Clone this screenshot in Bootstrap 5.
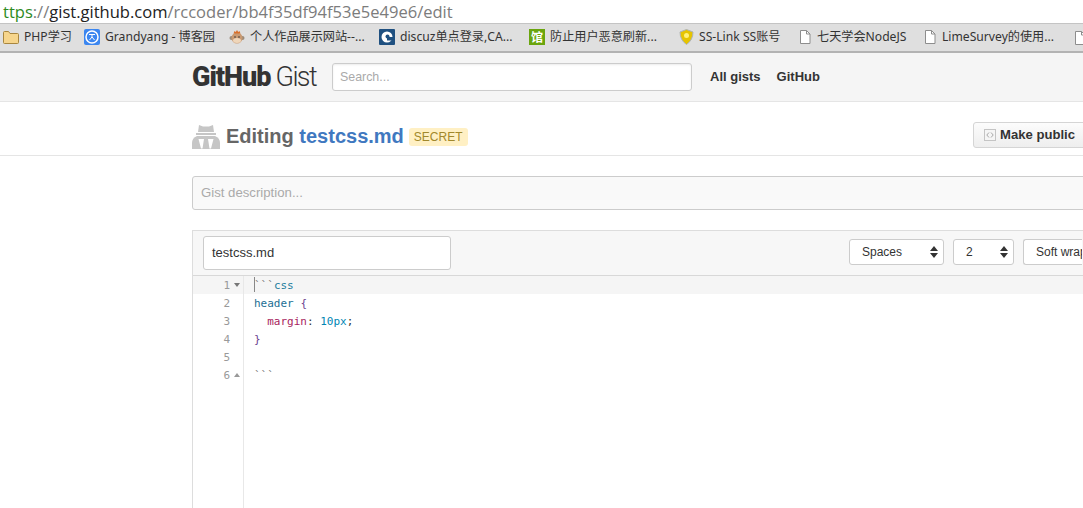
<!DOCTYPE html>
<html lang="zh">
<head>
<meta charset="utf-8">
<title>Editing testcss.md</title>
<link href="https://cdn.jsdelivr.net/npm/bootstrap@5.3.0/dist/css/bootstrap.min.css" rel="stylesheet">
<style>
html,body{height:100%;overflow:hidden;background:#fff}
body{font-family:"Liberation Sans",Arial,"Noto Sans CJK SC",sans-serif;color:#333;font-size:13px;width:1083px}
.url-bar{height:24px;border-bottom:1px solid #c4c4c4;padding-left:3px;font-family:"Open Sans","Noto Sans",sans-serif;font-size:16.55px;line-height:23px;color:#7c7c7c;white-space:nowrap;overflow:hidden}
.url-sec{color:#2e8b1e}
.url-host{color:#222}
.bm-bar{height:29px;background:#dfdfdf;border-bottom:2px solid #b3b3b3;padding-left:3px;font-family:"Noto Sans","Noto Sans CJK SC",sans-serif;font-size:12.15px;color:#333;white-space:nowrap;overflow:hidden}
.bm-link{flex:none;gap:5px}
.bm-link svg{flex:none}
.bm-w1{width:81px}.bm-w2{width:145px}.bm-w3{width:150px}.bm-w4{width:119px}.bm-w5{width:125px}
.gist-head{height:49px;background:#f5f5f5;border-bottom:1px solid #e5e5e5;padding-left:192px}
.gist-logo{width:140px;font-family:"Roboto","Liberation Sans",sans-serif;font-size:27px;line-height:1;color:#333;letter-spacing:-1px}
.gist-logo b{font-weight:900}
.gist-logo span{font-weight:300;margin-left:5px;letter-spacing:-1.6px}
.search-box{width:360px;height:28px;background:#fff;border:1px solid #ccc;border-radius:3px;padding:0 7px;font-size:12.4px;line-height:26px;color:#aaa;box-shadow:inset 0 1px 2px rgba(0,0,0,.075)}
.head-link{font-size:13px;font-weight:700;color:#333;text-decoration:none;margin-left:18px}
.head-link+.head-link{margin-left:16px}
.title-row{height:54px;border-bottom:1px solid #e5e5e5}
.page-col{margin-left:192px;width:980px}
.title-row .page-col{height:53px;padding-top:14px}
.agent{margin-right:6px;margin-top:4px}
.title-txt{font-size:20px;font-weight:700;color:#666;line-height:1}
.title-txt a{color:#4078c0;text-decoration:none}
.secret-tag{background:#fff0c4;color:#a1882b;font-size:12px;line-height:18px;height:18px;padding:0 5px;border-radius:3px;margin-left:5px;margin-top:2px}
.public-btn{margin-left:auto;width:199px;height:26px;border:1px solid #d5d5d5;border-radius:3px;background:linear-gradient(#fcfcfc,#eee);font-size:13.1px;font-weight:700;color:#333;padding-left:10px;margin-top:-1px;gap:4px}
.desc-box{height:34px;margin-top:20px;border:1px solid #ccc;border-radius:3px;background:#f9f9f9;padding:0 8px;line-height:31px;font-size:13.2px;color:#aaa}
.file-box{margin-top:20px;border:1px solid #ddd;border-bottom:0;height:300px}
.file-head{height:45px;background:#f7f7f7;border-bottom:1px solid #d8d8d8;padding:5px 10px}
.name-box{width:248px;height:34px;background:#fff;border:1px solid #ccc;border-radius:3px;padding:0 8px;font-size:13px;line-height:32px;color:#333}
.sel-box{height:26px;border:1px solid #ccc;border-radius:3px;background:#fff;font-size:12px;line-height:24px;padding-left:12px;color:#333;margin-top:3px;margin-right:9px}
.sel-spaces{width:95px;margin-left:398px}
.sel-size{width:61px}
.sel-wrap{width:59px;margin-right:0;overflow:hidden;white-space:nowrap;border-right:0;border-radius:3px 0 0 3px}
.updown{margin-right:5px}
.code-area{font-family:"DejaVu Sans Mono","Liberation Mono",monospace;font-size:11px;line-height:18px;height:260px;color:#333}
.gut{width:51px;border-right:1px solid #e8e8e8;height:100%;color:#999;flex:none}
.gut-row{height:18px;padding-right:13px;text-align:right;position:relative;line-height:19px}
.gut-row.on,.code-row.on{background:#f5f5f5}
.fold{position:absolute;right:3px;top:7px;display:block}
.code-lines{flex:1}
.code-row{height:18px;padding-left:10px;white-space:pre;position:relative;line-height:19px}
.caret-bar{position:absolute;left:10px;top:1px;width:1px;height:15px;background:#888}
.c-tick{color:#777}.c-css{color:#1d7e9e}.c-tag{color:#1c6e94}.c-brace{color:#6b3f8f}.c-prop{color:#a71d5d}.c-num{color:#0086b3}
</style>
</head>
<body>
<div class="url-bar"><span class="url-sec">ttps</span>://<span class="url-host">gist.github.com</span>/rccoder/bb4f35df94f53e5e49e6/edit</div>

<div class="bm-bar d-flex align-items-center">
  <div class="bm-link bm-w1 d-flex align-items-center">
    <svg width="16" height="14" viewBox="0 0 16 14"><path d="M.5 2.500q0-1 1-1h4l1.500 2h7.500q1 0 1 1v8q0 1-1 1h-13q-1 0-1-1z" fill="#f6d58c" stroke="#a8863f"/></svg><span>PHP学习</span>
  </div>
  <div class="bm-link bm-w2 d-flex align-items-center">
    <svg width="16" height="16" viewBox="0 0 16 16"><rect width="16" height="16" rx="2" fill="#3b86f0"/><circle cx="8" cy="8" r="6" fill="none" stroke="#fff" stroke-width="1.500"/><path d="M5 5.500h6M8 5.500v3M5.500 11l2.500-3 2.500 3" fill="none" stroke="#fff"/></svg><span>Grandyang - 博客园</span>
  </div>
  <div class="bm-link bm-w3 d-flex align-items-center">
    <svg width="16" height="16" viewBox="0 0 16 16"><circle cx="2.500" cy="9" r="2" fill="#9b8a78"/><circle cx="13.500" cy="9" r="2" fill="#9b8a78"/><circle cx="8" cy="9" r="5.500" fill="#c99a72"/><ellipse cx="8" cy="11.500" rx="4" ry="2.500" fill="#efd6ba"/><path d="M4.500 4.500 5.500 2l1.300 1L8 1l1.200 2 1.300-1 1 2.500z" fill="#d8702c"/><circle cx="6" cy="8" r=".8" fill="#333"/><circle cx="10" cy="8" r=".8" fill="#333"/></svg><span>个人作品展示网站--...</span>
  </div>
  <div class="bm-link bm-w3 d-flex align-items-center">
    <svg width="16" height="16" viewBox="0 0 16 16"><rect width="16" height="16" rx="1" fill="#1f5080"/><circle cx="8" cy="8" r="5.500" fill="#fff"/><path d="M8 8h6v3.500H8z" fill="#1f5080"/><circle cx="8.500" cy="7.500" r="2" fill="#1f5080"/></svg><span>discuz单点登录,CA...</span>
  </div>
  <div class="bm-link bm-w3 d-flex align-items-center">
    <svg width="16" height="16" viewBox="0 0 16 16"><rect width="16" height="16" fill="#6aa50e"/><text x="8" y="13" text-anchor="middle" font-size="12" font-family="Noto Sans CJK SC" font-weight="700" fill="#fff">馆</text></svg><span>防止用户恶意刷新...</span>
  </div>
  <div class="bm-link bm-w4 d-flex align-items-center">
    <svg width="15" height="16" viewBox="0 0 15 16"><path d="M7.500 .5 14 3q0 8-6.500 12.500Q1 11 1 3z" fill="#e6c400" stroke="#aeb3b3"/><circle cx="7.500" cy="6.500" r="2.500" fill="#fff17a"/></svg><span>SS-Link SS账号</span>
  </div>
  <div class="bm-link bm-w5 d-flex align-items-center">
    <svg width="14" height="16" viewBox="0 0 14 16"><path d="M2.500 1.500h6l3.500 3.500v9.500h-9.500z" fill="#fff" stroke="#8d8d8d"/><path d="M8.500 1.500V5H12" fill="none" stroke="#8d8d8d"/></svg><span>七天学会NodeJS</span>
  </div>
  <div class="bm-link bm-w3 d-flex align-items-center">
    <svg width="14" height="16" viewBox="0 0 14 16"><path d="M2.500 1.500h6l3.500 3.500v9.500h-9.500z" fill="#fff" stroke="#8d8d8d"/><path d="M8.500 1.500V5H12" fill="none" stroke="#8d8d8d"/></svg><span>LimeSurvey的使用...</span>
  </div>
  <div class="bm-link d-flex align-items-center">
    <svg width="14" height="16" viewBox="0 0 14 16"><path d="M2.500 1.500h6l3.500 3.500v9.500h-9.500z" fill="#fff" stroke="#8d8d8d"/><path d="M8.500 1.500V5H12" fill="none" stroke="#8d8d8d"/></svg>
  </div>
</div>

<header class="gist-head d-flex align-items-center">
  <div class="gist-logo flex-none"><b>GitHub</b><span>Gist</span></div>
  <div class="search-box">Search...</div>
  <a class="head-link" href="#">All gists</a>
  <a class="head-link" href="#">GitHub</a>
</header>

<div class="title-row">
  <div class="page-col d-flex align-items-center">
    <svg class="agent" width="28" height="25" viewBox="0 0 28 25" fill="#c6c6c6"><path d="M6 7 7 0l4 1.500h6L21 0l1 7z"/><rect x="4" y="8" width="20" height="2"/><path d="M0 24v-6q0-5 5-7h18q5 2 5 7v6z"/><path d="M6.500 14H12l-1.500 9.500H9zM16 14h5.500L19 23.500h-1.500z" fill="#fff"/></svg>
    <div class="title-txt">Editing <a href="#">testcss.md</a></div>
    <span class="secret-tag">SECRET</span>
    <div class="public-btn d-flex align-items-center">
      <svg width="12" height="12" viewBox="0 0 12 12"><rect x=".5" y=".5" width="11" height="11" fill="#f5f5f5" stroke="#c4c4c4"/><path d="M5 3.500 2.800 6 5 8.500M7 3.500 9.200 6 7 8.500" fill="none" stroke="#a8a8a8"/></svg>
      <span>Make public</span>
    </div>
  </div>
</div>

<main class="page-col">
  <div class="desc-box">Gist description...</div>
  <section class="file-box">
    <div class="file-head d-flex">
      <div class="name-box flex-none">testcss.md</div>
      <div class="sel-box sel-spaces flex-none d-flex justify-content-between align-items-center">Spaces
        <svg class="updown" width="8" height="12" viewBox="0 0 8 12" fill="#333"><path d="M0 5 4 0l4 5zM0 7h8l-4 5z"/></svg></div>
      <div class="sel-box sel-size flex-none d-flex justify-content-between align-items-center">2
        <svg class="updown" width="8" height="12" viewBox="0 0 8 12" fill="#333"><path d="M0 5 4 0l4 5zM0 7h8l-4 5z"/></svg></div>
      <div class="sel-box sel-wrap flex-none">Soft wrap</div>
    </div>
    <div class="code-area d-flex">
      <div class="gut">
        <div class="gut-row on">1<svg class="fold" width="6" height="4" viewBox="0 0 6 4" fill="#777"><path d="M0 0h6L3 4z"/></svg></div>
        <div class="gut-row">2</div>
        <div class="gut-row">3</div>
        <div class="gut-row">4</div>
        <div class="gut-row">5</div>
        <div class="gut-row">6<svg class="fold" width="6" height="4" viewBox="0 0 6 4" fill="#999"><path d="M0 4h6L3 0z"/></svg></div>
      </div>
      <div class="code-lines">
        <div class="code-row on"><span class="caret-bar"></span><span class="c-tick">```</span><span class="c-css">css</span></div>
        <div class="code-row"><span class="c-tag">header</span> <span class="c-brace">{</span></div>
        <div class="code-row">  <span class="c-prop">margin</span>: <span class="c-num">10px</span>;</div>
        <div class="code-row"><span class="c-brace">}</span></div>
        <div class="code-row"></div>
        <div class="code-row"><span class="c-tick">```</span></div>
      </div>
    </div>
  </section>
</main>
<script src="https://cdn.jsdelivr.net/npm/bootstrap@5.3.0/dist/js/bootstrap.bundle.min.js"></script>
</body>
</html>
